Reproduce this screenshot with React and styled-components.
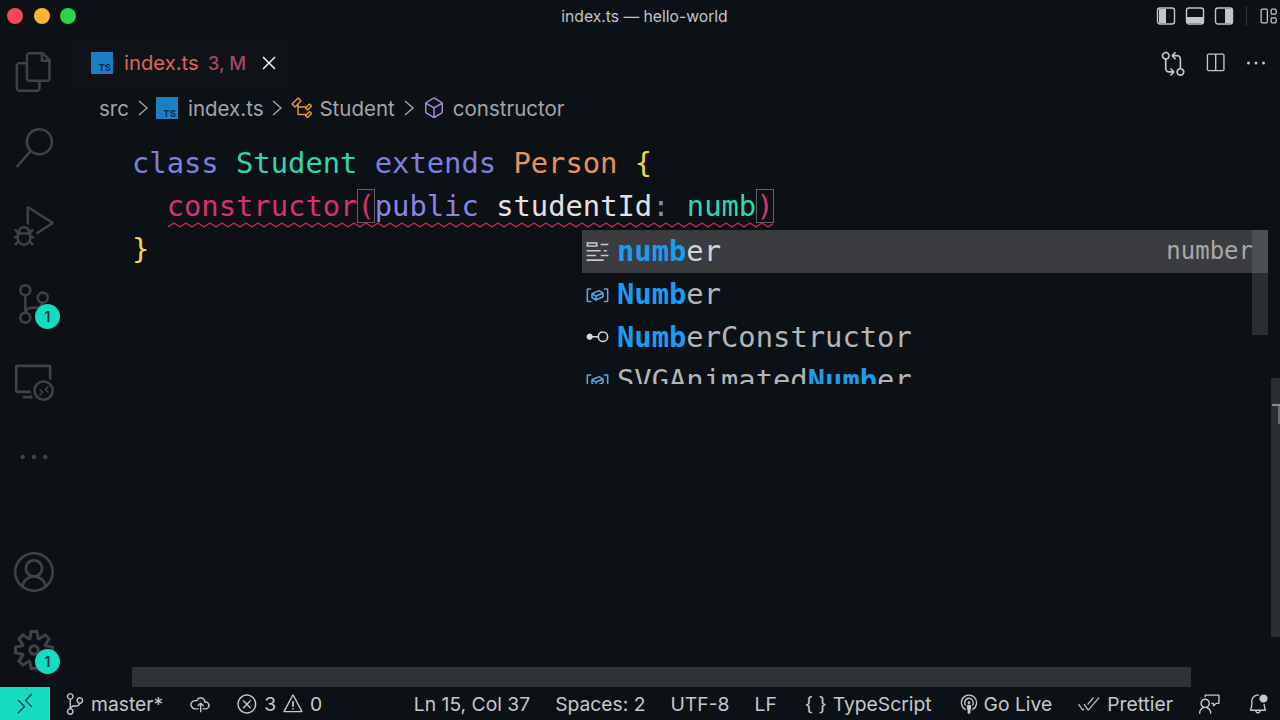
import React from 'react';
import styled, { createGlobalStyle } from 'styled-components';
import {
  VscFiles, VscSearch, VscDebugAlt, VscSourceControl, VscRemoteExplorer, VscEllipsis,
  VscAccount, VscSettingsGear, VscClose, VscSymbolClass, VscSymbolMethod, VscGitCompare,
  VscSplitHorizontal, VscSymbolKeyword, VscSymbolVariable, VscSymbolInterface, VscRemote,
  VscCloudUpload, VscError, VscWarning, VscBroadcast, VscCheckAll,
  VscFeedback, VscBellDot, VscLayout,
} from 'react-icons/vsc';

const GlobalStyle = createGlobalStyle`
  html, body {
    margin: 0;
    background: #0c1116;
  }
`;

const Window = styled.div`
  width: 1280px;
  height: 720px;
  position: relative;
  overflow: hidden;
  display: flex;
  flex-direction: column;
  background: #0c1116;
  font-family: Inter, "Liberation Sans", sans-serif;
  color: #c5c8cc;
`;

const TitleBar = styled.div`
  height: 33px;
  flex: none;
  position: relative;
  display: flex;
  align-items: center;
  justify-content: center;
  padding-left: 9px;
  box-sizing: border-box;
  font-size: 15.7px;
  color: #c2c4c6;
`;

const Lights = styled.div`
  position: absolute;
  left: 7px;
  top: 8px;
  display: flex;
  gap: 10.5px;
`;

const Light = styled.span`
  width: 16px;
  height: 16px;
  border-radius: 50%;
  background: ${(p) => p.$color};
`;

const LayoutIcons = styled.div`
  position: absolute;
  left: 1156px;
  top: 6px;
  display: flex;
  align-items: center;
  gap: 9px;
  color: #c4c6c8;
`;

const LayoutDivider = styled.span`
  width: 1px;
  height: 20px;
  margin: 0 2px 0 3px;
  background: #33373b;
`;

const Body = styled.div`
  flex: 1;
  min-height: 0;
  display: flex;
`;

const ActivityBar = styled.div`
  width: 72px;
  flex: none;
  display: flex;
  flex-direction: column;
  align-items: center;
  color: #3f4246;
  padding-right: 4px;
  box-sizing: border-box;
`;

const ActivityItem = styled.div`
  position: relative;
  height: ${(p) => p.$h}px;
  flex: none;
  display: flex;
  align-items: center;
  justify-content: center;
  margin-top: ${(p) => p.$mt || 0}px;
`;

const Badge = styled.span`
  position: absolute;
  right: -6px;
  bottom: ${(p) => p.$bottom}px;
  width: 25px;
  height: 25px;
  border-radius: 50%;
  background: #14dcc0;
  color: #123a3a;
  font-size: 14px;
  font-weight: 600;
  display: flex;
  align-items: center;
  justify-content: center;
`;

const Main = styled.div`
  flex: 1;
  min-width: 0;
  display: flex;
  flex-direction: column;
`;

const TabRow = styled.div`
  height: 55px;
  margin-top: 2px;
  flex: none;
  display: flex;
  align-items: center;
  justify-content: space-between;
`;

const Tab = styled.div`
  width: 218px;
  height: 100%;
  box-sizing: border-box;
  padding-left: 19px;
  display: flex;
  align-items: center;
  background: #0f1318;
  font-size: 20.3px;
  color: #e0625c;
`;

const TsIcon = styled.span`
  width: 22px;
  height: 22px;
  flex: none;
  background: #1a7fc4;
  color: #0c2f4c;
  font-size: 9.5px;
  font-weight: 700;
  display: flex;
  align-items: flex-end;
  justify-content: flex-end;
  padding: 0 2px 1px 0;
  box-sizing: border-box;
  line-height: 1;
`;

const TabName = styled.span`
  margin-left: 11px;
`;

const TabStatus = styled.span`
  margin-left: 9px;
  font-size: 18.5px;
  font-weight: 500;
  color: #a8485a;
`;

const TabClose = styled.span`
  margin-left: 11px;
  display: flex;
  color: #f2f2f2;
`;

const EditorActions = styled.div`
  display: flex;
  align-items: center;
  gap: 18px;
  padding-right: 12px;
  color: #c4c6c8;
`;

const Breadcrumbs = styled.div`
  height: 36px;
  flex: none;
  padding-left: 27px;
  display: flex;
  align-items: center;
  font-size: 20.5px;
  color: #a3a5a8;
`;

const Crumb = styled.span`
  display: flex;
  align-items: center;
  color: ${(p) => p.$color || 'inherit'};
`;

const CrumbText = styled.span`
  margin-left: ${(p) => p.$ml || 0}px;
`;

const CrumbSep = styled.svg`
  width: 12px;
  height: 18px;
  margin: 0 7px 0 8px;
  flex: none;
`;

const Editor = styled.div`
  flex: 1;
  min-height: 0;
  position: relative;
  padding: 16px 0 0 60px;
  font-family: "DejaVu Sans Mono", "Liberation Mono", monospace;
  font-size: 28.8px;
  line-height: 43px;
  white-space: pre;
`;

const CodeLine = styled.div`
  height: 43px;
  position: relative;
`;

const Tok = styled.span`
  color: ${(p) => p.$c};
`;

const Match = styled.span`
  color: ${(p) => p.$c};
  box-shadow: inset 0 0 0 1px #5f6366;
`;

const Squiggle = styled.svg`
  position: absolute;
  left: 36px;
  top: 37px;
  width: 605px;
  height: 6px;
`;

const Suggest = styled.div`
  position: absolute;
  left: 510px;
  top: 104px;
  width: 686px;
  height: 154px;
  overflow: hidden;
  background: #0c1116;
`;

const SuggestRow = styled.div`
  height: 43px;
  display: flex;
  align-items: center;
  background: ${(p) => (p.$active ? '#3a3c40' : 'transparent')};
  color: ${(p) => (p.$active ? '#d4d4d6' : '#b3b5b8')};
`;

const SuggestIcon = styled.span`
  width: 31px;
  margin-right: 4px;
  flex: none;
  display: flex;
  justify-content: center;
  color: ${(p) => p.$c};
`;

const Hit = styled.span`
  color: #1d9bf0;
  font-weight: 700;
`;

const SuggestDetail = styled.span`
  margin-left: auto;
  padding-right: 15px;
  font-size: 24px;
  color: #a8a8ac;
`;

const SuggestThumb = styled.div`
  position: absolute;
  right: 0;
  top: 0;
  width: 16px;
  height: 105px;
  background: rgba(130, 140, 145, 0.25);
`;

const HScroll = styled.div`
  position: absolute;
  left: 60px;
  bottom: 0;
  width: 1059px;
  height: 20px;
  background: #2f3336;
`;

const VScroll = styled.div`
  position: absolute;
  right: 0;
  top: 252px;
  width: 9px;
  height: 259px;
  background: #2b2f32;
`;

const RulerCursor = styled.div`
  position: absolute;
  right: 0;
  top: 26px;
  width: 8px;
  height: 2px;
  background: #8a8d90;
`;

const RulerMark = styled.div`
  position: absolute;
  right: 0;
  top: 28px;
  width: 2px;
  height: 18px;
  background: #6a6d70;
`;

const StatusBar = styled.div`
  height: 33px;
  flex: none;
  display: flex;
  align-items: center;
  justify-content: space-between;
  font-size: 19.3px;
  color: #c5c8cc;
`;

const StatusGroup = styled.div`
  display: flex;
  align-items: center;
  gap: ${(p) => p.$gap || 0}px;
  padding-right: ${(p) => p.$pr || 0}px;
`;

const Remote = styled.div`
  width: 50px;
  height: 33px;
  background: #14dcc0;
  color: #0f3a3a;
  display: flex;
  align-items: center;
  justify-content: center;
`;

const StatusItem = styled.span`
  display: flex;
  align-items: center;
  gap: ${(p) => p.$gap || 7}px;
  margin-left: ${(p) => p.$ml || 0}px;
`;

const Sep = () => (
  <CrumbSep viewBox="0 0 12 18">
    <path d="M2 2l8 7-8 7" fill="none" stroke="#a3a5a8" strokeWidth="1.4" />
  </CrumbSep>
);

// half filled panel icons of the title bar, side says which part is filled
const PanelIcon = ({ side }) => {
  const fill = { left: 'M3 3h7v14H3z', bottom: 'M2 11h16v6H2z', right: 'M11 3h7v14h-7z' }[side];
  return (
    <svg width="20" height="20" viewBox="0 0 20 20">
      <rect x="1.5" y="2" width="17" height="16" rx="2.5" fill="none" stroke="currentColor" strokeWidth="1.4" />
      <path d={fill} fill="currentColor" />
    </svg>
  );
};

const wave = Array.from({ length: 102 }, (_, i) => `${i * 6} ${i % 2 ? 1 : 5}`).join(' L');

const Typed = ({ hit, rest, before }) => (
  <span>
    {before}
    <Hit>{hit}</Hit>
    {rest}
  </span>
);

export default function App() {
  return (
    <Window>
      <GlobalStyle />
      <TitleBar>
        <Lights>
          <Light $color="#f2485a" />
          <Light $color="#fdb52e" />
          <Light $color="#2ed24a" />
        </Lights>
        index.ts — hello-world
        <LayoutIcons>
          <PanelIcon side="left" />
          <PanelIcon side="bottom" />
          <PanelIcon side="right" />
          <LayoutDivider />
          <VscLayout size={20} />
        </LayoutIcons>
      </TitleBar>
      <Body>
        <ActivityBar>
          <ActivityItem $h={78}><VscFiles size={40} /></ActivityItem>
          <ActivityItem $h={74}><VscSearch size={40} /></ActivityItem>
          <ActivityItem $h={82}><VscDebugAlt size={40} /></ActivityItem>
          <ActivityItem $h={74}>
            <VscSourceControl size={40} />
            <Badge $bottom={12}>1</Badge>
          </ActivityItem>
          <ActivityItem $h={80}><VscRemoteExplorer size={40} /></ActivityItem>
          <ActivityItem $h={72}><VscEllipsis size={36} /></ActivityItem>
          <ActivityItem $h={80} $mt={39}><VscAccount size={40} /></ActivityItem>
          <ActivityItem $h={76}>
            <VscSettingsGear size={40} />
            <Badge $bottom={14}>1</Badge>
          </ActivityItem>
        </ActivityBar>
        <Main>
          <TabRow>
            <Tab>
              <TsIcon>TS</TsIcon>
              <TabName>index.ts</TabName>
              <TabStatus>3, M</TabStatus>
              <TabClose><VscClose size={24} /></TabClose>
            </Tab>
            <EditorActions>
              <VscGitCompare size={26} />
              <VscSplitHorizontal size={22} />
              <VscEllipsis size={24} />
            </EditorActions>
          </TabRow>
          <Breadcrumbs>
            <Crumb>src</Crumb>
            <Sep />
            <Crumb><TsIcon>TS</TsIcon><CrumbText $ml={10}>index.ts</CrumbText></Crumb>
            <Sep />
            <Crumb>
              <Crumb $color="#e39a33"><VscSymbolClass size={24} /></Crumb>
              <CrumbText $ml={5}>Student</CrumbText>
            </Crumb>
            <Sep />
            <Crumb>
              <Crumb $color="#a98bd8"><VscSymbolMethod size={24} /></Crumb>
              <CrumbText $ml={7}>constructor</CrumbText>
            </Crumb>
          </Breadcrumbs>
          <Editor>
            <CodeLine>
              <Tok $c="#7f7fe0">class </Tok>
              <Tok $c="#2fd6b0">Student </Tok>
              <Tok $c="#7f7fe0">extends </Tok>
              <Tok $c="#e8935a">Person </Tok>
              <Tok $c="#f5d547">{'{'}</Tok>
            </CodeLine>
            <CodeLine>
              {'  '}
              <Tok $c="#d9306f">constructor</Tok>
              <Match $c="#d9306f">(</Match>
              <Tok $c="#8a84e4">public </Tok>
              <Tok $c="#e6e0e6">studentId</Tok>
              <Tok $c="#8a8d90">: </Tok>
              <Tok $c="#2fd6b0">numb</Tok>
              <Match $c="#d9306f">)</Match>
              <Squiggle viewBox="0 0 605 6">
                <path d={`M${wave}`} fill="none" stroke="#c9304f" strokeWidth="1.3" />
              </Squiggle>
            </CodeLine>
            <CodeLine>
              <Tok $c="#f5d547">{'}'}</Tok>
            </CodeLine>
            <Suggest>
              <SuggestRow $active>
                <SuggestIcon $c="#c9c9cb"><VscSymbolKeyword size={25} /></SuggestIcon>
                <Typed hit="numb" rest="er" />
                <SuggestDetail>number</SuggestDetail>
              </SuggestRow>
              <SuggestRow>
                <SuggestIcon $c="#5aa7df"><VscSymbolVariable size={25} /></SuggestIcon>
                <Typed hit="Numb" rest="er" />
              </SuggestRow>
              <SuggestRow>
                <SuggestIcon $c="#d8dadc"><VscSymbolInterface size={25} /></SuggestIcon>
                <Typed hit="Numb" rest="erConstructor" />
              </SuggestRow>
              <SuggestRow>
                <SuggestIcon $c="#5aa7df"><VscSymbolVariable size={25} /></SuggestIcon>
                <Typed before="SVGAnimated" hit="Numb" rest="er" />
              </SuggestRow>
              <SuggestThumb />
            </Suggest>
            <VScroll>
              <RulerCursor />
              <RulerMark />
            </VScroll>
            <HScroll />
          </Editor>
        </Main>
      </Body>
      <StatusBar>
        <StatusGroup>
          <Remote><VscRemote size={24} /></Remote>
          <StatusItem $ml={14} $gap={5}><VscSourceControl size={22} />master*</StatusItem>
          <StatusItem $ml={26}><VscCloudUpload size={22} /></StatusItem>
          <StatusItem $ml={25} $gap={6}><VscError size={22} />3</StatusItem>
          <StatusItem $ml={6} $gap={6}><VscWarning size={22} />0</StatusItem>
        </StatusGroup>
        <StatusGroup $gap={26} $pr={11}>
          <StatusGroup $gap={25}>
            <StatusItem>Ln 15, Col 37</StatusItem>
            <StatusItem>Spaces: 2</StatusItem>
            <StatusItem>UTF-8</StatusItem>
            <StatusItem>LF</StatusItem>
          </StatusGroup>
          <StatusItem $ml={2} $gap={6}><span>{'{ }'}</span>TypeScript</StatusItem>
          <StatusItem $gap={4}><VscBroadcast size={22} />Go Live</StatusItem>
          <StatusItem><VscCheckAll size={22} />Prettier</StatusItem>
          <StatusItem><VscFeedback size={22} /></StatusItem>
          <StatusItem><VscBellDot size={22} /></StatusItem>
        </StatusGroup>
      </StatusBar>
    </Window>
  );
}
